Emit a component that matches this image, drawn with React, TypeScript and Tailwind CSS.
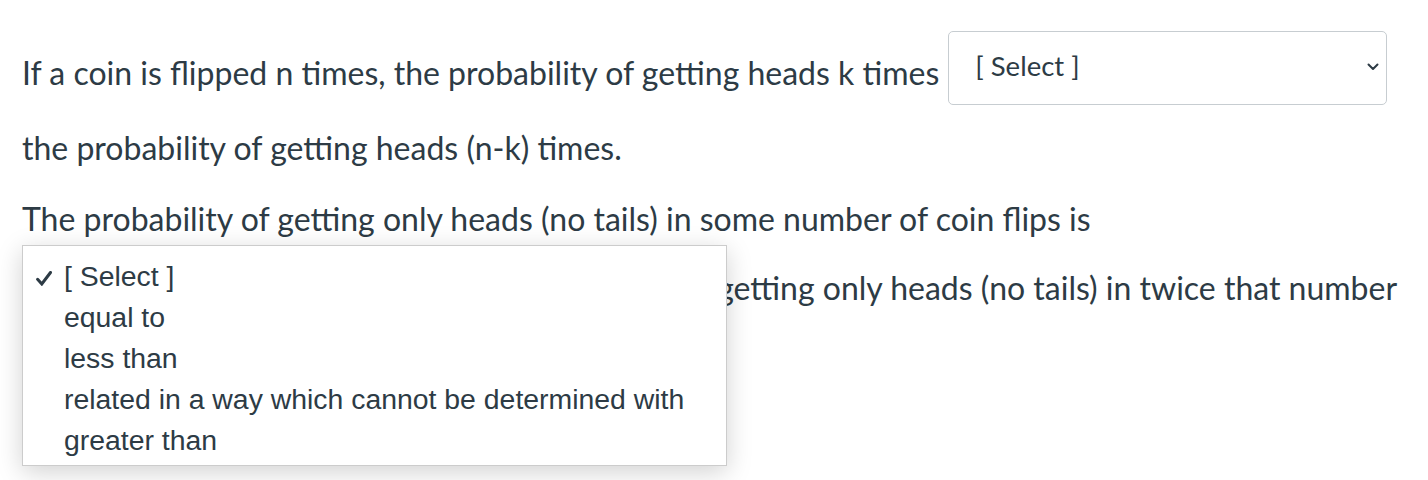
import React from "react";

function SelectBox({ label = true }: { label?: boolean }) {
  return (
    <div className="relative w-[439px] h-[74px] shrink-0 rounded-[5px] border border-[#c7cdd1] bg-white">
      {label && (
        <span className="absolute left-[26px] top-[20px] text-[27.5px] leading-none text-[#2d3b45]">[ Select ]</span>
      )}
      <svg className="absolute right-[7px] top-[31px]" width="12" height="8" viewBox="0 0 12 8">
        <path d="M1.5 1.5 L6 6 L10.5 1.5" fill="none" stroke="#2d3b45" strokeWidth="2" strokeLinecap="round" strokeLinejoin="round" />
      </svg>
    </div>
  );
}

export default function App() {
  const options = ["equal to", "less than", "related in a way which cannot be determined with", "greater than"];
  return (
    <div className="relative w-[1428px] h-[480px] overflow-hidden bg-white pl-[22px] text-[#2d3b45]" style={{ fontFamily: "Lato, sans-serif" }}>
      <div className="pt-[31px] flex items-start">
        <span className="mt-[26px] text-[32px] leading-none whitespace-nowrap">If a coin is flipped n times, the probability of getting heads k times</span>
        <div className="ml-[9px]"><SelectBox /></div>
      </div>
      <div className="mt-[27px] text-[32px] leading-none whitespace-nowrap">the probability of getting heads (n-k) times.</div>
      <div className="mt-[39px] text-[32px] leading-none whitespace-nowrap">The probability of getting only heads (no tails) in some number of coin flips is</div>
      <div className="mt-[11px] flex items-start">
        <SelectBox label={false} />
        <span className="ml-[8px] mt-[26px] text-[32px] leading-none whitespace-nowrap">the probability of getting only heads (no tails) in twice that number</span>
      </div>

      <div
        className="absolute left-[22px] top-[245px] w-[705px] h-[221px] bg-white border border-[#cccccc] shadow-[0_6px_24px_rgba(0,0,0,0.18)] pt-[10px] text-[28.4px] text-[#2d3b45]"
        style={{ fontFamily: "'Liberation Sans', Arial, sans-serif" }}
      >
        <div className="flex items-center h-[41px] leading-[41px]">
          <div className="w-[41px] h-[41px] shrink-0 flex items-center pl-[13px] pt-[3px]">
            <svg width="16" height="15" viewBox="0 0 16 15">
              <path d="M1.6 8.3 L5.8 13 L14.5 1.5" fill="none" stroke="#2d3b45" strokeWidth="3" strokeLinecap="round" strokeLinejoin="miter" />
            </svg>
          </div>
          <span>[ Select ]</span>
        </div>
        {options.map((o) => (
          <div key={o} className="h-[41px] leading-[41px] pl-[41px] whitespace-nowrap">{o}</div>
        ))}
      </div>
    </div>
  );
}
